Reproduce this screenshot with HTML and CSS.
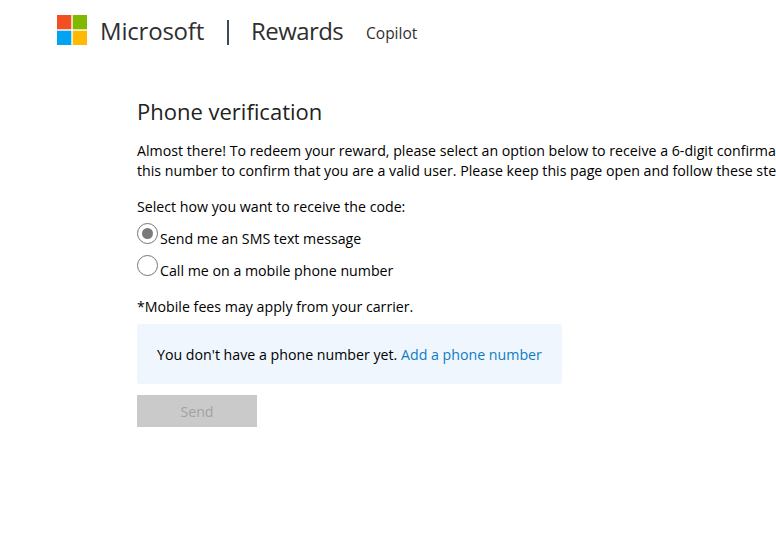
FILE: index.html
```html
<!DOCTYPE html>
<html>
  <head>
    <title>Phone verification</title>
    <link rel="stylesheet" href="styles.css">
  </head>
  <body>
    <div class="header">
      <svg class="logo" width="30" height="30" viewBox="0 0 30 30">
        <rect x="0" y="0" width="14.3" height="14.3" fill="#f25022"/>
        <rect x="15.7" y="0" width="14.3" height="14.3" fill="#7fba00"/>
        <rect x="0" y="15.7" width="14.3" height="14.3" fill="#00a4ef"/>
        <rect x="15.7" y="15.7" width="14.3" height="14.3" fill="#ffb900"/>
      </svg>
      <span class="brand">Microsoft</span>
      <span class="divider"></span>
      <span class="brand rewards">Rewards</span>
      <a class="navlink">Copilot</a>
    </div>
    <div class="content">
      <h1>Phone verification</h1>
      <p class="intro">Almost there! To redeem your reward, please select an option below to receive a 6-digit confirma<br>this number to confirm that you are a valid user. Please keep this page open and follow these ste</p>
      <p class="prompt">Select how you want to receive the code:</p>
      <label class="option first"><span class="radio checked"></span>Send me an SMS text message</label>
      <label class="option"><span class="radio"></span>Call me on a mobile phone number</label>
      <p class="fees">*Mobile fees may apply from your carrier.</p>
      <div class="notice">You don't have a phone number yet. <a class="addlink">Add a phone number</a></div>
      <div class="send">Send</div>
    </div>
  </body>
</html>
```

FILE: styles.css
```css
body {
  margin: 0;
  background: #fff;
  color: #000;
  font-family: "Open Sans", "Noto Sans", sans-serif;
  font-size: 14.2px;
  line-height: 20px;
}

.header {
  display: flex;
  align-items: center;
  height: 30px;
  padding: 15px 0 0 57px;
  color: #2f2f2f;
}

.logo {
  margin-right: 13px;
}

.brand {
  margin-top: 2px;
  font-size: 24px;
  line-height: 30px;
  letter-spacing: -0.2px;
}

.rewards {
  letter-spacing: -0.6px;
}

.divider {
  width: 2px;
  height: 25px;
  margin: 5px 22px 0 23px;
  background: #3a4a5e;
}

.navlink {
  margin: 5px 0 0 23px;
  font-size: 15.5px;
}

.content {
  padding: 49px 0 0 137px;
}

h1 {
  margin: 0 0 13px;
  font-size: 22px;
  line-height: 34px;
  font-weight: 400;
  color: #222;
}

p {
  margin: 0;
  white-space: nowrap;
}

.prompt {
  margin-top: 16px;
}

.option {
  display: flex;
  align-items: flex-end;
  height: 22px;
}

.option.first {
  margin-top: 10px;
}

.option + .option {
  margin-top: 10px;
}

.radio {
  box-sizing: border-box;
  width: 21px;
  height: 21px;
  margin: 0 2px 5px 0;
  border: 1px solid #767676;
  border-radius: 50%;
  background: #fff;
}

.radio.checked {
  padding: 4px;
  background: #7a7a7a content-box;
}

.fees {
  margin-top: 16px;
}

.notice {
  box-sizing: border-box;
  width: 425px;
  height: 60px;
  margin-top: 7px;
  padding: 21px 20px 19px;
  border-radius: 3px;
  background: #eff6fe;
  white-space: nowrap;
}

.addlink {
  color: #0f7cc2;
}

.send {
  width: 120px;
  height: 32px;
  margin-top: 11px;
  background: #cacaca;
  color: #a2a2a2;
  line-height: 33px;
  text-align: center;
}
```
